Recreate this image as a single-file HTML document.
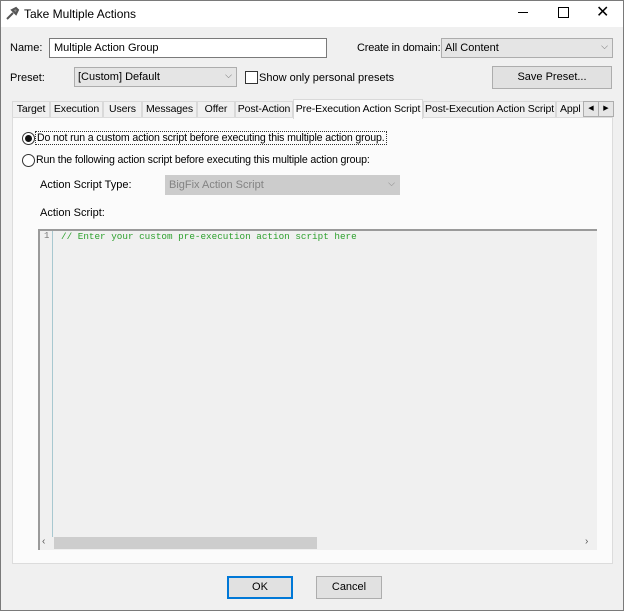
<!DOCTYPE html>
<html><head><style>
body{margin:0;width:624px;height:611px;overflow:hidden;font-family:"Liberation Sans",sans-serif;font-size:11px;color:#000;background:#f0f0f0;position:relative}
.a{position:absolute;white-space:nowrap}
.tab{position:absolute;top:101px;height:16px;border:1px solid #d9d9d9;border-bottom:none;background:#f0f0f0;line-height:15px;text-align:center;box-sizing:border-box;white-space:nowrap;overflow:hidden;font-size:10.5px;letter-spacing:-0.1px}
.btn{position:absolute;background:#e1e1e1;border:1px solid #adadad;box-sizing:border-box;text-align:center}
</style></head><body>
<div class="a" style="left:0;top:0;width:622px;height:609px;border:1px solid #7a7a7a"></div>
<div class="a" style="left:1px;top:1px;width:622px;height:26px;background:#fff"></div>
<svg class="a" style="left:6px;top:6px" width="14" height="14" viewBox="0 0 14 14"><path d="M2 12 L7 7 M6 4 L10 2 L12 4 L10 8 Z M2 12 L1 13" stroke="#555" stroke-width="2" fill="#888"/></svg>
<div class="a" style="left:24px;top:7px;font-size:12px">Take Multiple Actions</div>
<div class="a" style="left:518px;top:12px;width:10px;height:1px;background:#000"></div>
<div class="a" style="left:558px;top:7px;width:9px;height:9px;border:1px solid #000"></div>
<div class="a" style="left:596px;top:2px;font-size:16px">✕</div>

<div class="a" style="left:10px;top:42px">Name:</div>
<div class="a" style="left:49px;top:38px;width:278px;height:20px;border:1px solid #7a7a7a;background:#fff;box-sizing:border-box;padding:3px 4px">Multiple Action Group</div>
<div class="a" style="left:357px;top:42px;letter-spacing:-0.2px">Create in domain:</div>
<div class="a" style="left:441px;top:38px;width:172px;height:20px;border:1px solid #adadad;background:#e5e5e5;box-sizing:border-box;padding:3px 3px">All Content<span style="position:absolute;right:4px;top:2px;color:#666;font-size:9px">⌵</span></div>

<div class="a" style="left:10px;top:72px">Preset:</div>
<div class="a" style="left:74px;top:67px;width:163px;height:20px;border:1px solid #adadad;background:#e5e5e5;box-sizing:border-box;padding:3px 3px">[Custom] Default<span style="position:absolute;right:4px;top:2px;color:#666;font-size:9px">⌵</span></div>
<div class="a" style="left:245px;top:71px;width:11px;height:11px;border:1px solid #333;background:#fff"></div>
<div class="a" style="left:259px;top:72px">Show only personal presets</div>
<div class="btn" style="left:492px;top:66px;width:120px;height:23px;line-height:21px">Save Preset...</div>

<div class="a" style="left:12px;top:117px;width:601px;height:447px;background:#fbfbfb;border:1px solid #dcdcdc;box-sizing:border-box"></div>
<div class="tab" style="left:12px;width:38px">Target</div>
<div class="tab" style="left:50px;width:53px">Execution</div>
<div class="tab" style="left:103px;width:39px">Users</div>
<div class="tab" style="left:142px;width:55px">Messages</div>
<div class="tab" style="left:197px;width:38px">Offer</div>
<div class="tab" style="left:235px;width:58px">Post-Action</div>
<div class="tab" style="left:293px;top:99px;height:20px;width:130px;background:#fbfbfb;line-height:18px">Pre-Execution Action Script</div>
<div class="tab" style="left:423px;width:133px">Post-Execution Action Script</div>
<div class="tab" style="left:556px;width:30px;text-align:left;padding-left:3px">Appl</div>
<div class="a" style="left:583px;top:101px;width:14px;height:14px;border:1px solid #adadad;background:#e5e5e5;font-size:7px;text-align:center;line-height:14px">◀</div>
<div class="a" style="left:598px;top:101px;width:14px;height:14px;border:1px solid #adadad;background:#e5e5e5;font-size:7px;text-align:center;line-height:14px">▶</div>

<div class="a" style="left:22px;top:132px;width:11px;height:11px;border:1px solid #333;border-radius:50%;background:#fff"></div>
<div class="a" style="left:25px;top:135px;width:7px;height:7px;border-radius:50%;background:#111"></div>
<div class="a" style="left:35px;top:131px;border:1px dotted #333;padding:0 1px;font-size:10.6px;letter-spacing:-0.15px">Do not run a custom action script before executing this multiple action group.</div>
<div class="a" style="left:22px;top:154px;width:11px;height:11px;border:1px solid #333;border-radius:50%;background:#fff"></div>
<div class="a" style="left:36px;top:154px;font-size:10.6px;letter-spacing:-0.15px">Run the following action script before executing this multiple action group:</div>
<div class="a" style="left:40px;top:179px">Action Script Type:</div>
<div class="a" style="left:165px;top:175px;width:235px;height:20px;background:#cccccc;border:1px solid #ccc;box-sizing:border-box;padding:3px 3px;color:#838383">BigFix Action Script<span style="position:absolute;right:4px;top:2px;font-size:9px">⌵</span></div>
<div class="a" style="left:40px;top:207px">Action Script:</div>

<div class="a" style="left:38px;top:229px;width:559px;height:321px;background:#f0f0f0;border-top:2px solid #9a9a9a;border-left:2px solid #9a9a9a;box-sizing:border-box"></div>
<div class="a" style="left:52px;top:231px;width:1px;height:306px;background:#a8c8d0"></div>
<div class="a" style="left:44px;top:231px;font-family:'Liberation Mono',monospace;font-size:9px;color:#777">1</div>
<div class="a" style="left:61px;top:231px;font-family:'Liberation Mono',monospace;font-size:9.3px;color:#2ea02e">// Enter your custom pre-execution action script here</div>
<div class="a" style="left:54px;top:537px;width:263px;height:12px;background:#cdcdcd"></div>
<div class="a" style="left:42px;top:536px;font-size:10px;color:#555">‹</div>
<div class="a" style="left:585px;top:536px;font-size:10px;color:#555">›</div>

<div class="btn" style="left:227px;top:576px;width:66px;height:23px;line-height:21px;border:1px solid #0078d7;box-shadow:inset 0 0 0 1px #0078d7">OK</div>
<div class="btn" style="left:316px;top:576px;width:66px;height:23px;line-height:21px">Cancel</div>
</body></html>
